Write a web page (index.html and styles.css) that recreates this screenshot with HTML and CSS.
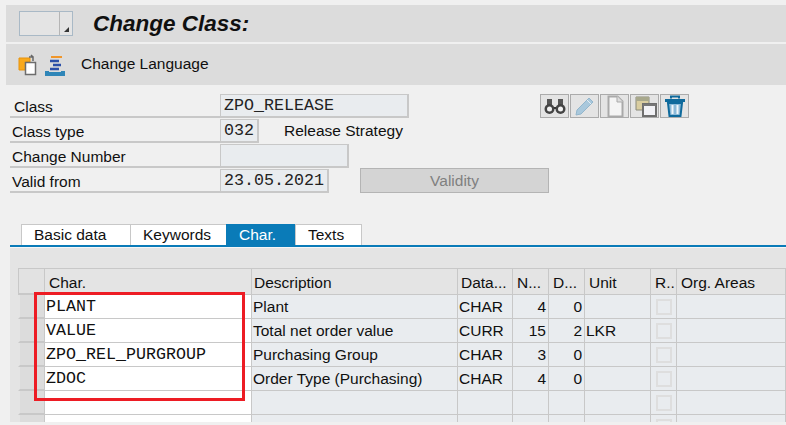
FILE: index.html
```html
<!DOCTYPE html>
<html lang="en">

<head>
  <meta charset="UTF-8" />
  <title>Change Class</title>
  <link rel="stylesheet" href="styles.css">
</head>

<body>
  <header class="title-bar">
    <div class="command-box"><span class="command-arrow"></span></div>
    <h1>Change Class:</h1>
  </header>

  <nav class="toolbar">
    <svg class="tool-icon" viewBox="0 0 20 24" width="20" height="24">
      <path d="M1 5h11v4H8v8H1z" fill="#f9a91c" stroke="#e8930c" />
      <path d="M7.500 9.500h10v12h-10z" fill="#fff" stroke="#6d6d6d" stroke-width="1.500" />
      <path d="M11 4h4v4M15 4l-2-2" fill="none" stroke="#666" stroke-width="1.500" />
    </svg>
    <svg class="tool-icon" viewBox="0 0 22 24" width="22" height="24">
      <path d="M7 4h11" stroke="#f0962a" stroke-width="2" />
      <path d="M6 8h9M9 12h8M6 16h9" stroke="#2b4fa8" stroke-width="2.500" />
      <path d="M1 18h4v1h12v-1h4v5H1z" fill="#2f86b8" />
    </svg>
    <span class="toolbar-text">Change Language</span>
  </nav>

  <section class="header-form">
    <div class="fields">
      <div class="field-row">
        <label class="field-label label-first">Class</label>
        <span class="field field-class">ZPO_RELEASE</span>
      </div>
      <div class="field-row">
        <label class="field-label">Class type</label>
        <span class="field field-type">032</span>
        <span class="field-note">Release Strategy</span>
      </div>
      <div class="field-row">
        <label class="field-label">Change Number</label>
        <span class="field field-change"></span>
      </div>
      <div class="field-row">
        <label class="field-label">Valid from</label>
        <span class="field field-date">23.05.2021</span>
        <button class="validity" type="button">Validity</button>
      </div>
    </div>

    <div class="icon-buttons">
      <button class="icon-btn" type="button">
        <svg viewBox="0 0 24 20" width="24" height="20">
          <path d="M4 9V3h5v6zM15 9V3h5v6z" fill="#555" />
          <path d="M9 12h6" stroke="#333" stroke-width="2" />
          <circle cx="6.500" cy="13" r="5" fill="#444" />
          <circle cx="17.500" cy="13" r="5" fill="#444" />
          <circle cx="6.500" cy="13" r="2.500" fill="#f2f2f2" />
          <circle cx="17.500" cy="13" r="2.500" fill="#f2f2f2" />
        </svg>
      </button>
      <button class="icon-btn" type="button">
        <svg viewBox="0 0 24 20" width="24" height="20">
          <path d="M3 19l1-5L16 2l4 4L8 18z" fill="#a9c8dc" stroke="#93b6cc" />
          <path d="M14 4l4 4" stroke="#e4eef4" />
        </svg>
      </button>
      <button class="icon-btn" type="button">
        <svg viewBox="0 0 24 22" width="24" height="22">
          <path d="M5.500 1.500h9l5 5v15h-14z" fill="#f4f4f4" stroke="#a9a9a9" stroke-width="2" />
          <path d="M14 1v6h6" fill="#ddd" stroke="#a9a9a9" />
        </svg>
      </button>
      <button class="icon-btn" type="button">
        <svg viewBox="0 0 24 22" width="24" height="22">
          <path d="M3 2h13v13H3z" fill="#d9cda0" stroke="#8a8a7a" />
          <path d="M3 2h13v4H3z" fill="#a8a88c" />
          <path d="M10 9h13v12H10z" fill="#f2f2f6" stroke="#6f6f6f" stroke-width="2" />
          <path d="M10 9h13v2H10z" fill="#777" />
        </svg>
      </button>
      <button class="icon-btn" type="button">
        <svg viewBox="0 0 24 22" width="24" height="22">
          <path d="M8 3.500V1.500h8v2" fill="none" stroke="#0f6a9c" stroke-width="2" />
          <path d="M2 4h20v3H2z" fill="#0f6a9c" />
          <path d="M5 8h14l-1.500 13h-11z" fill="#8cbad8" stroke="#0f6a9c" stroke-width="2" />
          <path d="M9.500 10v9M14.500 10v9" stroke="#f0f6fa" stroke-width="2" />
        </svg>
      </button>
    </div>
  </section>

  <div class="tabs">
    <span class="tab">Basic data</span>
    <span class="tab tab-keywords">Keywords</span>
    <span class="tab tab-active">Char.</span>
    <span class="tab tab-texts">Texts</span>
  </div>

  <section class="tab-panel">
    <div class="grid-wrap">
      <div class="grid-row grid-head">
        <div class="sel"></div>
        <div class="cell c-char">Char.</div>
        <div class="cell c-desc">Description</div>
        <div class="cell c-type">Data...</div>
        <div class="cell c-n">N...</div>
        <div class="cell c-d">D...</div>
        <div class="cell c-unit">Unit</div>
        <div class="cell c-r">R..</div>
        <div class="cell c-org">Org. Areas</div>
      </div>

      <div class="grid-row">
        <div class="sel"></div>
        <div class="cell c-char mono">PLANT</div>
        <div class="cell c-desc">Plant</div>
        <div class="cell c-type">CHAR</div>
        <div class="cell c-n num">4</div>
        <div class="cell c-d num">0</div>
        <div class="cell c-unit"></div>
        <div class="cell c-r"><span class="check"></span></div>
        <div class="cell c-org"></div>
      </div>
      <div class="grid-row">
        <div class="sel"></div>
        <div class="cell c-char mono">VALUE</div>
        <div class="cell c-desc">Total net order value</div>
        <div class="cell c-type">CURR</div>
        <div class="cell c-n num">15</div>
        <div class="cell c-d num">2</div>
        <div class="cell c-unit">LKR</div>
        <div class="cell c-r"><span class="check"></span></div>
        <div class="cell c-org"></div>
      </div>
      <div class="grid-row">
        <div class="sel"></div>
        <div class="cell c-char mono">ZPO_REL_PURGROUP</div>
        <div class="cell c-desc">Purchasing Group</div>
        <div class="cell c-type">CHAR</div>
        <div class="cell c-n num">3</div>
        <div class="cell c-d num">0</div>
        <div class="cell c-unit"></div>
        <div class="cell c-r"><span class="check"></span></div>
        <div class="cell c-org"></div>
      </div>
      <div class="grid-row">
        <div class="sel"></div>
        <div class="cell c-char mono">ZDOC</div>
        <div class="cell c-desc">Order Type (Purchasing)</div>
        <div class="cell c-type">CHAR</div>
        <div class="cell c-n num">4</div>
        <div class="cell c-d num">0</div>
        <div class="cell c-unit"></div>
        <div class="cell c-r"><span class="check"></span></div>
        <div class="cell c-org"></div>
      </div>
      <div class="grid-row">
        <div class="sel"></div>
        <div class="cell c-char"></div>
        <div class="cell c-desc"></div>
        <div class="cell c-type"></div>
        <div class="cell c-n"></div>
        <div class="cell c-d"></div>
        <div class="cell c-unit"></div>
        <div class="cell c-r"><span class="check"></span></div>
        <div class="cell c-org"></div>
      </div>
      <div class="grid-row">
        <div class="sel"></div>
        <div class="cell c-char"></div>
        <div class="cell c-desc"></div>
        <div class="cell c-type"></div>
        <div class="cell c-n"></div>
        <div class="cell c-d"></div>
        <div class="cell c-unit"></div>
        <div class="cell c-r"><span class="check"></span></div>
        <div class="cell c-org"></div>
      </div>

      <div class="highlight"></div>
    </div>
  </section>
</body>

</html>
```

FILE: styles.css
```css
:root {
  --color-page: #f0f0f0;
  --color-bar: #dcdcdc;
  --color-panel: #e4e4e4;
  --color-line: #c8c8c8;
  --color-field: #e9ecef;
  --color-blue: #0a7bb8;
  --color-text: #101010;
  --font-main: "Liberation Sans", Arial, sans-serif;
  --font-mono: "Liberation Mono", "Courier New", monospace;
}

* {
  box-sizing: border-box;
}

html,
body {
  height: 425px;
  overflow: hidden;
}

body {
  margin: 0;
  padding-top: 5px;
  background: var(--color-page);
  color: var(--color-text);
  font-family: var(--font-main);
  font-size: 15.500px;
}

.title-bar {
  margin-left: 6px;
  height: 37px;
  background: var(--color-bar);
  display: flex;
  align-items: center;
  gap: 20px;
  padding-left: 13px;
}

.command-box {
  width: 54px;
  height: 25px;
  border: 1px solid #a9b9c6;
  background: linear-gradient(to right, #e4e4e4 39px, #b5b5b5 39px, #b5b5b5 40px, #e4e4e4 40px);
  position: relative;
}

.command-arrow {
  position: absolute;
  right: 3px;
  bottom: 3px;
  border-style: solid;
  border-width: 0 0 5px 5px;
  border-color: transparent transparent #333 transparent;
}

h1 {
  margin: 0;
  font-size: 22.500px;
  font-weight: 700;
  font-style: italic;
}

.toolbar {
  margin: 2px 0 0 6px;
  height: 41px;
  background: var(--color-bar);
  display: flex;
  align-items: center;
  padding-left: 12px;
  gap: 6px;
}

.toolbar-text {
  margin: 0 0 2px 9px;
}

.header-form {
  display: flex;
  padding: 8px 0 0 10px;
  height: 139px;
}

.fields {
  flex: none;
  width: 530px;
}

.field-row {
  display: flex;
  align-items: flex-end;
  height: 25px;
}

.field-label {
  flex: none;
  width: 210px;
  height: 25px;
  padding: 5px 0 0 2px;
  border-bottom: 2px solid var(--color-line);
}

.label-first {
  padding-left: 4px;
}

.field {
  flex: none;
  height: 24px;
  border: 1px solid var(--color-line);
  border-width: 1px 2px 2px 1px;
  background: var(--color-field);
  font-family: var(--font-mono);
  font-size: 16.670px;
  line-height: 22px;
  padding-left: 3px;
  color: #222;
}

.field-class {
  width: 189px;
}

.field-type {
  width: 39px;
}

.field-change {
  width: 129px;
}

.field-date {
  width: 109px;
}

.field-note {
  flex: none;
  margin-left: 25px;
  align-self: center;
}

.validity {
  flex: none;
  margin-left: 31px;
  width: 189px;
  height: 25px;
  border: 1px solid #b4b4b4;
  background: #d4d4d4;
  color: #808080;
  font-family: var(--font-main);
  font-size: 15.500px;
}

.icon-buttons {
  display: flex;
  gap: 1px;
  align-self: flex-start;
  margin-top: 1px;
}

.icon-btn {
  width: 29px;
  height: 24px;
  padding: 0;
  border: 1px solid #ababab;
  background: #e4e4e4;
  display: flex;
  align-items: center;
  justify-content: center;
}

.tabs {
  display: flex;
  margin-left: 21px;
  height: 21px;
}

.tab {
  width: 109px;
  padding-left: 12px;
  border: 1px solid var(--color-line);
  border-right: 0;
  border-bottom: 0;
  background: #fff;
  line-height: 19px;
}

.tab-keywords {
  width: 96px;
}

.tab-active {
  width: 69px;
  background: var(--color-blue);
  border-color: var(--color-blue);
  color: #fff;
}

.tab-texts {
  width: 67px;
  border-right: 1px solid var(--color-line);
}

.tab-panel {
  margin-left: 10px;
  height: 177px;
  border-top: 2px solid var(--color-blue);
  background: linear-gradient(to bottom, #f6f6f6 1px, var(--color-panel) 1px);
  padding: 21px 0 0 8px;
}

.grid-wrap {
  position: relative;
  height: 154px;
  overflow: hidden;
  border-top: 1px solid var(--color-line);
}

.grid-row {
  display: grid;
  grid-template-columns: 27px 207px 206px 55px 36px 36px 66px 26px 1fr;
  height: 24px;
  background: var(--color-field);
}

.grid-head {
  height: 26px;
  background: #e4e4e4;
}

.sel {
  background: #dcdcdc;
  border-bottom: 2px solid var(--color-line);
  border-right: 1px solid var(--color-line);
  border-left: 2px solid var(--color-panel);
}

.grid-head .sel {
  background: #e2e2e2;
  border-left: 1px solid var(--color-line);
}

.cell {
  border-right: 1px solid var(--color-line);
  border-bottom: 1px solid var(--color-line);
  padding-left: 1px;
  line-height: 23px;
  white-space: nowrap;
  overflow: hidden;
}

.grid-head .cell {
  padding-left: 4px;
  line-height: 28px;
}

.grid-head .c-desc {
  padding-left: 2px;
}

.grid-head .c-type {
  padding-left: 3px;
}

.c-char {
  background: #fff;
}

.grid-head .c-char {
  background: #e4e4e4;
}

.mono {
  font-family: var(--font-mono);
  font-size: 16.670px;
}

.num {
  text-align: right;
  padding-right: 2px;
}

.c-r {
  display: flex;
  align-items: center;
  justify-content: center;
}

.grid-head .c-r {
  display: block;
}

.check {
  width: 16px;
  height: 16px;
  border: 2px solid #dedede;
  background: #e9ecef;
}

.highlight {
  position: absolute;
  left: 16px;
  top: 23px;
  width: 211px;
  height: 109px;
  border: 3px solid #ed1c24;
}
```
